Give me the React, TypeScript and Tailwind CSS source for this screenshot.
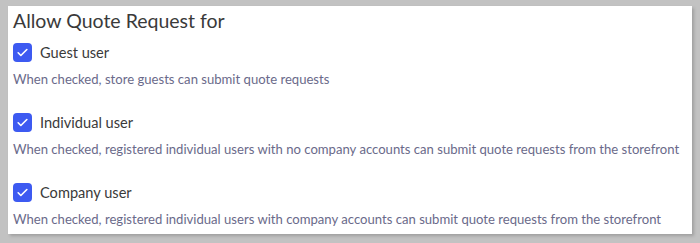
import React from "react";

const items = [
  { label: "Guest user", desc: "When checked, store guests can submit quote requests" },
  { label: "Individual user", desc: "When checked, registered individual users with no company accounts can submit quote requests from the storefront" },
  { label: "Company user", desc: "When checked, registered individual users with company accounts can submit quote requests from the storefront" },
];

function Check() {
  return (
    <div className="w-[19px] h-[19px] rounded-[4px] bg-[#3d5af1] flex items-center justify-center shrink-0">
      <svg width="13" height="13" viewBox="0 0 24 24" fill="none" stroke="white" strokeWidth="3" strokeLinecap="round" strokeLinejoin="round">
        <path d="M4 12.5l5 5L20 6.5" />
      </svg>
    </div>
  );
}

export default function App() {
  return (
    <div className="w-[700px] h-[243px] bg-[#c2c2c2] pt-[6px] pl-[8px]" style={{ fontFamily: "Lato, 'Noto Sans', sans-serif" }}>
      <div className="w-[684px] h-[228px] bg-white shadow-[2px_2px_3px_rgba(0,0,0,0.18)] pl-[5px] pt-[1px]">
        <div className="text-[19.5px] leading-[28px] text-[#3a3a3a]">Allow Quote Request for</div>
        <div className="flex flex-col gap-[25px] mt-[8px]">
          {items.map((it) => (
            <div key={it.label} className="flex flex-col">
              <div className="flex items-center gap-[8px] h-[19px]">
                <Check />
                <span className="text-[14.6px] text-[#3a3a3a]">{it.label}</span>
              </div>
              <div className="text-[13.1px] leading-[18px] mt-[8px] text-[#6a6a8a] whitespace-nowrap">{it.desc}</div>
            </div>
          ))}
        </div>
      </div>
    </div>
  );
}
